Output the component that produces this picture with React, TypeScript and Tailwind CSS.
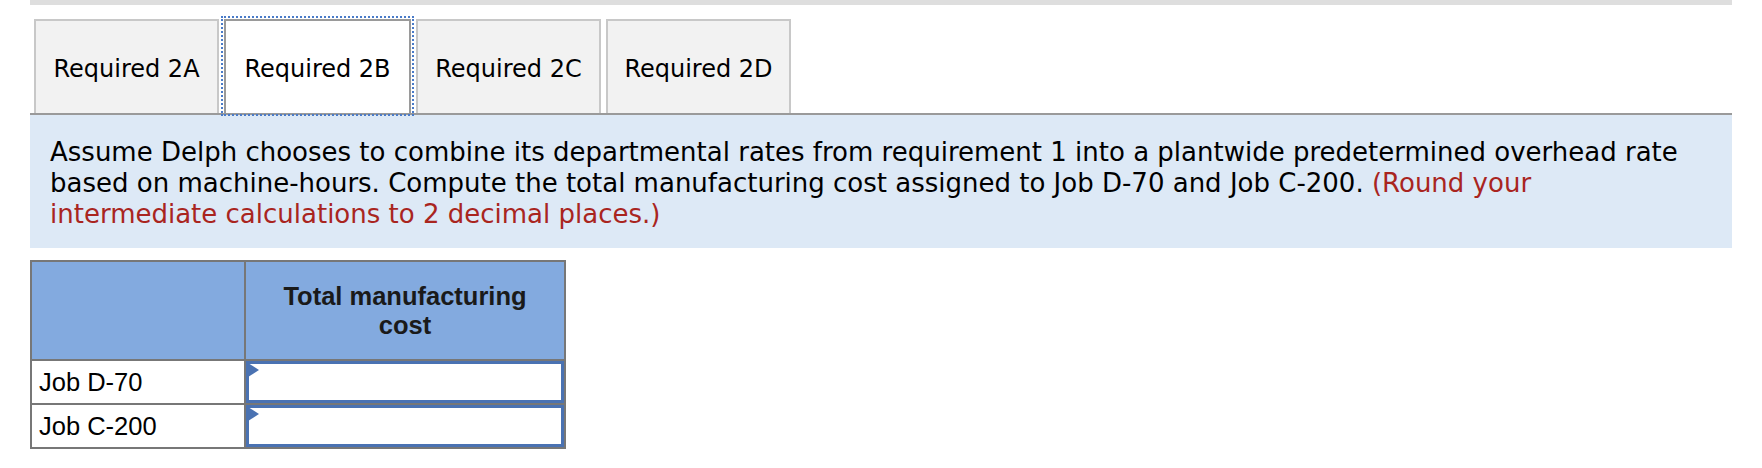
const tabs = ["Required 2A", "Required 2B", "Required 2C", "Required 2D"];
const activeTab = 1;

const jobs = ["Job D-70", "Job C-200"];

function AnswerInput() {
  return (
    <div className="relative h-full w-full border-[3px] border-[#4a72b2] bg-white">
      <svg
        className="absolute -left-[1px] -top-[1px]"
        width="12"
        height="16"
        viewBox="0 0 12 16"
      >
        <polygon points="0,0 11,7 0,14" fill="#4a72b2" />
      </svg>
    </div>
  );
}

export default function App() {
  return (
    <div className="min-h-screen bg-white">
      <div className="ml-[30px] w-[1702px]">
        <div className="h-[5px] bg-[#dedede]" />

        {/* Tabs */}
        <div className="mt-[14px] flex gap-[5px] border-b-2 border-[#9a9a9a] pl-[4px]">
          {tabs.map((tab, i) => {
            const isActive = i === activeTab;
            return (
              <button
                key={tab}
                className={
                  isActive
                    ? "h-[94px] w-[187px] border-2 border-b-0 border-[#9a9a9a] bg-white pt-[4px] text-[24px] text-black outline-2 outline-offset-[1px] outline-dotted outline-[#4a7bc8]"
                    : "h-[94px] w-[185px] border-2 border-b-0 border-[#c8c8c8] bg-[#f2f2f2] pt-[4px] text-[24px] text-black"
                }
                style={{ fontFamily: '"DejaVu Sans", Verdana, sans-serif' }}
              >
                {tab}
              </button>
            );
          })}
        </div>

        {/* Instructions */}
        <div
          className="bg-[#dde9f6] pb-[18px] pl-[20px] pr-[40px] pt-[22px] text-[26px] leading-[31px] text-black"
          style={{ fontFamily: '"DejaVu Sans", Verdana, sans-serif' }}
        >
          Assume Delph chooses to combine its departmental rates from requirement 1 into a plantwide
          predetermined overhead rate based on machine-hours. Compute the total manufacturing cost
          assigned to Job D-70 and Job C-200.{" "}
          <span className="text-[#a9251f]">
            (Round your intermediate calculations to 2 decimal places.)
          </span>
        </div>

        {/* Answer table */}
        <table
          className="mt-[12px] w-[536px] border-collapse border-2 border-[#777777] text-[25.5px] text-black"
          style={{ fontFamily: '"Liberation Sans", Arial, sans-serif' }}
        >
          <thead>
            <tr className="bg-[#83aadf]">
              <th className="h-[99px] w-[214px] border-2 border-[#777777]" />
              <th className="border-2 border-[#777777] px-2 text-center font-bold leading-[29px] text-[#1a1a1a]">
                Total manufacturing
                <br />
                cost
              </th>
            </tr>
          </thead>
          <tbody>
            {jobs.map((job) => (
              <tr key={job}>
                <td className="h-[44px] border-2 border-[#777777] bg-white pl-[7px] pt-[2px] leading-none">
                  {job}
                </td>
                <td className="h-[44px] border-2 border-[#777777] p-0">
                  <div className="h-[42px] w-full p-0">
                    <AnswerInput />
                  </div>
                </td>
              </tr>
            ))}
          </tbody>
        </table>
      </div>
    </div>
  );
}
